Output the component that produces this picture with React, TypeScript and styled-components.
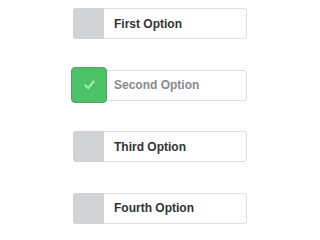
import React from 'react'
import styled, { createGlobalStyle } from 'styled-components'

const GlobalStyle = createGlobalStyle`
  html, body {
    margin: 0;
    padding: 0;
    background: #fff;
    font-family: "Liberation Sans", Arial, sans-serif;
  }
`

const options = [
  { id: 1, label: 'First Option', checked: false },
  { id: 2, label: 'Second Option', checked: true },
  { id: 3, label: 'Third Option', checked: false },
  { id: 4, label: 'Fourth Option', checked: false },
]

const List = styled.div`
  width: 174px;
  margin: 0 auto;
  padding-top: 8px;
  display: flex;
  flex-direction: column;
  gap: 30.5px;
`

const Row = styled.label`
  display: flex;
  align-items: stretch;
  height: 31px;
  cursor: pointer;
`

const Box = styled.span<{ checked: boolean }>`
  position: relative;
  z-index: 1;
  flex: none;
  display: flex;
  align-items: center;
  justify-content: center;
  box-sizing: border-box;
  width: ${(p) => (p.checked ? '36px' : '31px')};
  height: ${(p) => (p.checked ? '36px' : '31px')};
  margin: ${(p) => (p.checked ? '-2.5px -3px -2.5px -2px' : '0')};
  background: ${(p) => (p.checked ? '#4cc267' : '#d0d2d5')};
  border: ${(p) => (p.checked ? '1.5px solid #5f9a68' : 'none')};
  border-radius: ${(p) => (p.checked ? '4px' : '3px 0 0 3px')};
`

const Label = styled.span<{ checked: boolean }>`
  flex: 1;
  display: flex;
  align-items: center;
  box-sizing: border-box;
  padding-left: 10px;
  border: 1px solid #dedede;
  border-left: none;
  border-radius: 0 3px 3px 0;
  font-size: 12px;
  font-weight: bold;
  color: ${(p) => (p.checked ? '#8a8a8a' : '#333')};
`

const Check = () => (
  <svg width="11" height="10" viewBox="0 0 11 10">
    <path d="M1.5 5.6 L4.2 8.2 L9.6 1.6" fill="none" stroke="#a3e6ad" strokeWidth="2.4" strokeLinecap="round" strokeLinejoin="round" />
  </svg>
)

export default function App() {
  return (
    <>
      <GlobalStyle />
      <List>
        {options.map((o) => (
          <Row key={o.id}>
            <Box checked={o.checked}>{o.checked && <Check />}</Box>
            <Label checked={o.checked}>{o.label}</Label>
          </Row>
        ))}
      </List>
    </>
  )
}
